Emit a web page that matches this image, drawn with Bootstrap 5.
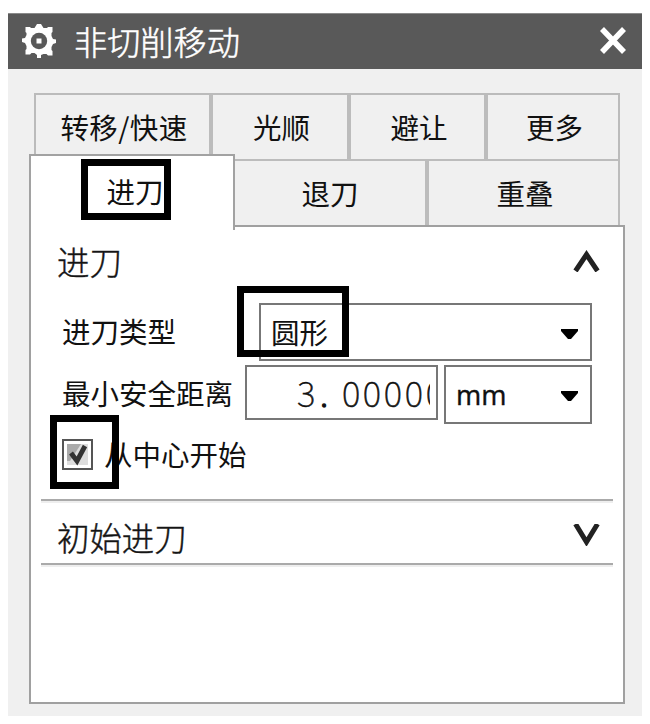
<!DOCTYPE html>
<html lang="zh-CN">
<head>
<meta charset="utf-8">
<meta name="viewport" content="width=device-width, initial-scale=1">
<title>非切削移动</title>
<link href="https://cdn.jsdelivr.net/npm/bootstrap@5.3.0/dist/css/bootstrap.min.css" rel="stylesheet">
<style>
body{background:#fff;color:#111;font-family:"Noto Sans CJK SC","Noto Sans",sans-serif;font-size:28.5px;line-height:1;overflow:hidden}
svg{display:block;flex:none}
.dialog{width:634px;height:703px;margin:13px 0 0 8px;background:#f0f0f0}
.titlebar{height:56px;background:#595959;color:#fff;padding:0 16px 2px 14px;border-top:1px solid #8a8a8a}
.title-text{font-size:33.2px;font-weight:300;-webkit-text-stroke:.5px #fff;margin-left:18px;line-height:48px}
.tabs-top{margin:24px 22px 0 26px;height:66px;border:2px solid #bbb;border-bottom:0}
.tabs-bottom{margin-left:21px;margin-right:22px;height:66px}
.tab-btn{border:0 solid #bcbcbc;background:#f0f0f0;white-space:nowrap}
.tabs-top .tab-btn{border-right-width:4px;padding-left:3px}
.tabs-top .tab-btn:last-child{border-right-width:0}
.tabs-top .t1{width:177px;letter-spacing:.4px}.t2{width:138px}.t3{width:137px}
.tab-active{width:206px;height:76px;margin-top:-5px;padding:0 0 4px 6px;background:#fff;border:2px solid #a2a2a2;border-bottom:0;z-index:2}
.t5{width:194px;border-top-width:2px!important;border-right-width:4px!important}
.t6{border-top-width:2px!important;border-right-width:2px!important;padding-left:3px}
.panel{margin:0 17px 0 21px;height:479px;background:#fff;border:2px solid #a0a0a0;padding:0 10px}
.section-head{font-size:32.4px;font-weight:300;-webkit-text-stroke:.45px #222;padding:0 13px 0 16px}
.head-a{height:75px;padding-bottom:7px}
.head-b{height:66px;padding-top:10px;margin-top:1px;border-top:2px solid #aaa;border-bottom:2px solid #aaa;box-shadow:0 2px 0 #eee,inset 0 2px 0 #eee}
.head-b svg{margin-bottom:4px}
.form-line{padding-left:21px;padding-right:21px}
.lbl{padding-top:14px}
.box{border:2px solid #777;background:#fff}
.type-box{width:333px;height:58px;padding:0 12px 0 10px}
.arrow{margin-top:3px}
.num-box{width:193px;height:55px;padding-left:50px;margin-right:6px}
.num-text{width:133px;font-size:35px;font-weight:100;letter-spacing:2.7px;-webkit-text-stroke:.6px #111;line-height:49px}
.num-dot{display:inline-block;width:24px;padding-left:2px;-webkit-text-stroke:1.4px #111}
.unit-box{width:148px;height:59px;padding:0 12px 0 10px;font-family:"Noto Sans",sans-serif;font-size:27px;-webkit-text-stroke:.3px #111}
.tick{width:31px;height:31px;border:2px solid #555}
.tick-label{margin-left:11px;margin-bottom:1px}
.callout{position:absolute;border:7px solid #000;pointer-events:none;z-index:3}
.callout-tab{left:50px;top:3px;width:90px;height:61px}
.callout-type{left:-24px;top:-19px;width:112px;height:71px}
.callout-tick{left:-14px;top:-26px;width:69px;height:74px}
.row-type{height:62px;margin-top:1px}.row-dist{height:62px}.row-tick{height:71px;padding-bottom:16px}
</style>
</head>
<body>
<main class="dialog">
  <header class="titlebar d-flex align-items-center">
    <svg width="34" height="34" viewBox="0 0 34 34"><path fill="#fff" d="M15 0h4l2.500 4h3.500l1-1h4.500v5l-1 1v3l1.500 3 3 .5v3.500l-3 1-1.500 3v3l1 1v4.500h-4.500l-1.500-1.500h-3L19 31v3h-4v-3l-2.500-2h-3L8 30.500H3.500V26l1-1v-3L3 19l-3-1v-3.500l3-.5 1.500-3V9l-1-1V3H8l1 1h3.500z"/><circle cx="17" cy="17" r="8.200" fill="#595959"/><path d="M14.500 14.500h5v5h-5z" fill="#fff"/></svg>
    <span class="title-text">非切削移动</span>
    <svg class="ms-auto" width="26" height="27" viewBox="0 0 26 27"><path d="M2 2l22 23M24 2L2 25" stroke="#fff" stroke-width="5.500"/></svg>
  </header>
  <nav class="tabs-top d-flex">
    <div class="tab-btn t1 d-flex align-items-center justify-content-center">转移/快速</div>
    <div class="tab-btn t2 d-flex align-items-center justify-content-center">光顺</div>
    <div class="tab-btn t3 d-flex align-items-center justify-content-center">避让</div>
    <div class="tab-btn flex-fill d-flex align-items-center justify-content-center">更多</div>
  </nav>
  <nav class="tabs-bottom d-flex">
    <div class="tab-btn tab-active position-relative d-flex align-items-center justify-content-center">进刀<span class="callout callout-tab"></span></div>
    <div class="tab-btn t5 d-flex align-items-center justify-content-center">退刀</div>
    <div class="tab-btn t6 flex-fill d-flex align-items-center justify-content-center">重叠</div>
  </nav>
  <section class="panel">
    <div class="section-head head-a d-flex align-items-center justify-content-between">进刀
      <svg width="27" height="22" viewBox="0 0 27 22"><path d="M2.500 21L13.500 4.500 24.500 21" fill="none" stroke="#222" stroke-width="5"/></svg>
    </div>
    <div class="form-line row-type d-flex align-items-start justify-content-between">
      <span class="lbl">进刀类型</span>
      <div class="box type-box position-relative d-flex align-items-center justify-content-between">圆形
        <svg class="arrow" width="17" height="10" viewBox="0 0 17 10"><path d="M0 0h17v2L10 10H7L0 2z" fill="#000"/></svg>
        <span class="callout callout-type"></span>
      </div>
    </div>
    <div class="form-line row-dist d-flex align-items-start">
      <span class="lbl me-auto">最小安全距离</span>
      <div class="box num-box"><div class="num-text overflow-hidden text-nowrap">3<span class="num-dot">.</span>00000</div></div>
      <div class="box unit-box d-flex align-items-center justify-content-between"><span class="unit-label">mm</span>
        <svg class="arrow" width="17" height="10" viewBox="0 0 17 10"><path d="M0 0h17v2L10 10H7L0 2z" fill="#000"/></svg>
      </div>
    </div>
    <div class="form-line row-tick d-flex align-items-center">
      <div class="tick position-relative">
        <svg width="27" height="27" viewBox="0 0 27 27"><path d="M3 3h21v21H3z" fill="#ddd"/><path d="M3 3h14L6 20H3z" fill="#aaa"/><path d="M7 12l6 8 8-15" fill="none" stroke="#333" stroke-width="4.800"/></svg>
        <span class="callout callout-tick"></span>
      </div>
      <span class="tick-label">从中心开始</span>
    </div>
    <div class="section-head head-b d-flex align-items-center justify-content-between">初始进刀
      <svg width="27" height="22" viewBox="0 0 27 22"><path d="M2.500 0l11 18L24.500 0" fill="none" stroke="#222" stroke-width="5"/></svg>
    </div>
  </section>
</main>
<script src="https://cdn.jsdelivr.net/npm/bootstrap@5.3.0/dist/js/bootstrap.bundle.min.js"></script>
</body>
</html>
